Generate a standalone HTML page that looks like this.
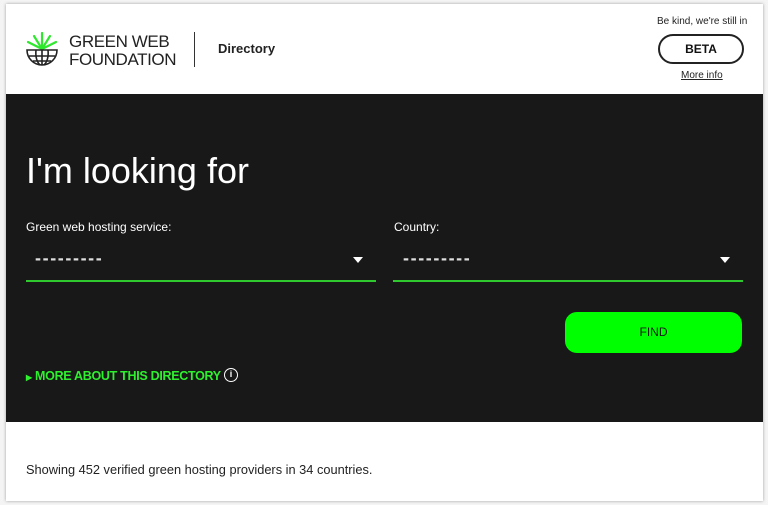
<!DOCTYPE html>
<html><head><meta charset="utf-8"><style>
*{margin:0;padding:0;box-sizing:border-box}
body{width:768px;height:505px;background:#f4f4f4;font-family:"Liberation Sans",sans-serif;position:relative;overflow:hidden}
.card{position:absolute;left:6px;top:4px;width:757px;height:497px;background:#fff;box-shadow:0 0 3px rgba(0,0,0,.35)}
.abs{position:absolute}
.dark{position:absolute;left:6px;top:94px;width:757px;height:328px;background:#181818}
</style></head><body>
<div class="card"></div>
<svg class="abs" style="left:25px;top:32px" width="34" height="34" viewBox="0 0 34 34">
<g stroke="#2ee82e" stroke-width="2.2" stroke-linecap="round">
<line x1="17" y1="17" x2="17" y2="1"/><line x1="17" y1="17" x2="9" y2="4"/><line x1="17" y1="17" x2="25" y2="4"/>
<line x1="17" y1="17" x2="3" y2="10"/><line x1="17" y1="17" x2="31" y2="10"/></g>
<g stroke="#222" stroke-width="1.6" fill="none">
<path d="M2 18 H32 A15 15 0 0 1 2 18Z"/><path d="M17 18 V33"/><path d="M11 18 Q10 28 15 33"/><path d="M23 18 Q24 28 19 33"/>
<path d="M4 24 H30"/><path d="M8 29 H26"/></g></svg>
<div class="abs" style="left:69px;top:33px;font-size:17px;line-height:18px;color:#222;letter-spacing:-.4px">GREEN WEB<br>FOUNDATION</div>
<div class="abs" style="left:194px;top:32px;width:1px;height:35px;background:#333"></div>
<div class="abs" style="left:218px;top:41px;font-size:13px;font-weight:bold;color:#222">Directory</div>
<div class="abs" style="left:657px;top:16px;font-size:10px;color:#222">Be kind, we're still in</div>
<div class="abs" style="left:658px;top:34px;width:86px;height:30px;border:2px solid #222;border-radius:15px;text-align:center;line-height:26px;font-size:12px;font-weight:bold;color:#111">BETA</div>
<div class="abs" style="left:681px;top:70px;font-size:10px;color:#222;text-decoration:underline">More info</div>
<div class="dark"></div>
<div class="abs" style="left:26px;top:150px;font-size:36px;color:#fff">I'm looking for</div>
<div class="abs" style="left:26px;top:220px;font-size:12px;color:#fff">Green web hosting service:</div>
<div class="abs" style="left:394px;top:220px;font-size:12px;color:#fff">Country:</div>
<div class="abs" style="left:35px;top:248px;font-size:18px;font-weight:bold;color:#ddd;letter-spacing:1.6px">---------</div>
<div class="abs" style="left:403px;top:248px;font-size:18px;font-weight:bold;color:#ddd;letter-spacing:1.6px">---------</div>
<div class="abs" style="left:353px;top:257px;width:0;height:0;border-left:5px solid transparent;border-right:5px solid transparent;border-top:6px solid #fff"></div>
<div class="abs" style="left:720px;top:257px;width:0;height:0;border-left:5px solid transparent;border-right:5px solid transparent;border-top:6px solid #fff"></div>
<div class="abs" style="left:26px;top:280px;width:350px;height:2px;background:#2fc92f"></div>
<div class="abs" style="left:393px;top:280px;width:350px;height:2px;background:#2fc92f"></div>
<div class="abs" style="left:565px;top:312px;width:177px;height:41px;background:#00ff00;border-radius:12px;text-align:center;line-height:41px;font-size:12px;color:#1a1a1a">FIND</div>
<div class="abs" style="left:26px;top:369px;font-size:12.5px;font-weight:bold;color:#2ef02e;letter-spacing:-.3px;white-space:nowrap"><span style="font-size:8px">&#9654;</span> MORE ABOUT THIS DIRECTORY</div>
<div class="abs" style="left:224px;top:368px;width:14px;height:14px;border:1.5px solid #fff;border-radius:50%;color:#fff;font-size:9px;font-weight:bold;text-align:center;line-height:11px">i</div>
<div class="abs" style="left:26px;top:462px;font-size:12.8px;color:#222">Showing 452 verified green hosting providers in 34 countries.</div>
</body></html>
